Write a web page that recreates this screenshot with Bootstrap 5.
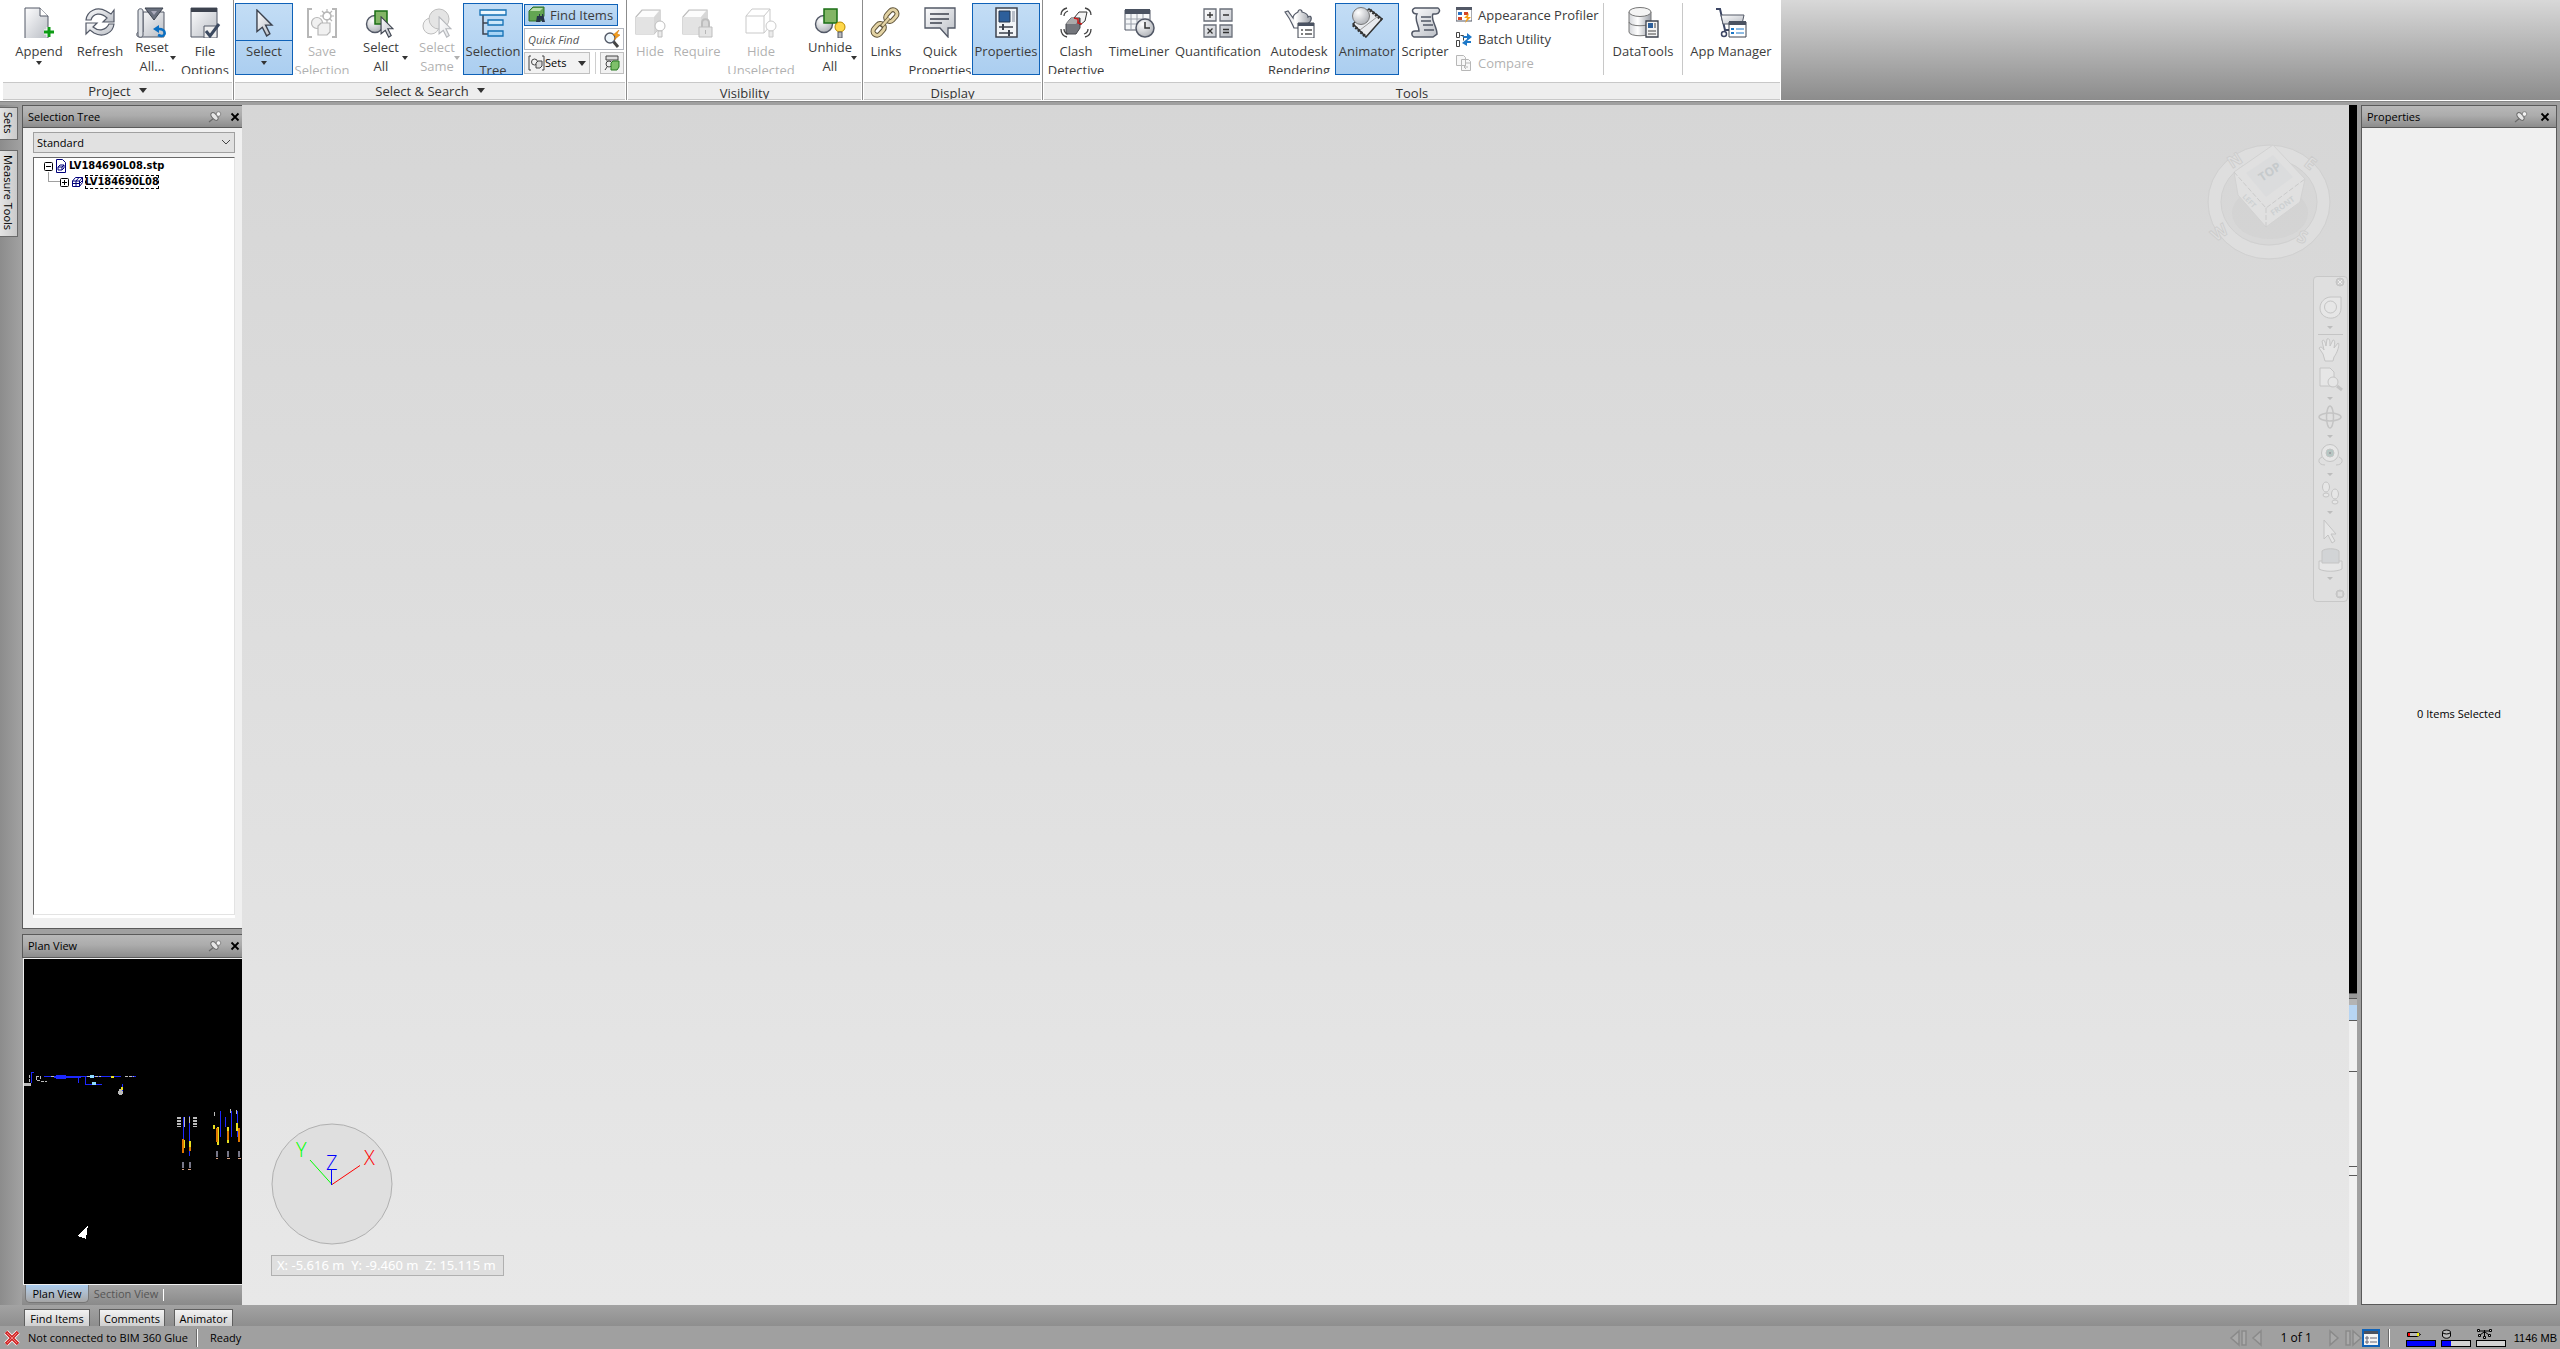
<!DOCTYPE html>
<html lang="en">
<head>
<meta charset="utf-8">
<meta name="viewport" content="width=device-width, initial-scale=1">
<title>Model Review</title>
<link href="https://cdn.jsdelivr.net/npm/bootstrap@5.3.0/dist/css/bootstrap.min.css" rel="stylesheet">
<style>
:root{--ui:"Open Sans","Noto Sans",sans-serif;--rib:"Open Sans","Noto Sans",sans-serif;--edge:#5a5a5a;--chrome:#a0a0a0}
body{background:var(--chrome);font-family:var(--ui);font-size:11px;line-height:16px;color:#000;overflow:hidden}
svg{display:block;flex:none}
button{font-family:inherit}
/* ribbon */
.ribbon{background:linear-gradient(#d8d8d8,#8c8c8c);border-bottom:1px solid #fff;height:101px}
.ribbon-sheet{background:#fff;font-family:var(--rib);font-size:13px;color:#3c3c3c;padding-left:2px}
.rgroup{border-right:1px solid #8c8c8c;height:100px}
.rgroup:last-child{border-right:0}
.rbody{height:82px;padding:3px 2px 0 1px}
.rname{height:18px;line-height:21px;background:#eee;border-top:1px solid #c8c8c8;border-bottom:1px solid #c8c8c8;margin:0 1px;overflow:hidden;color:#333;font-size:13px}
.rname .arrow{margin-top:-2px}
.rb{--bs-btn-padding-x:0;--bs-btn-padding-y:0;--bs-btn-border-radius:0;--bs-btn-font-size:13px;--bs-btn-line-height:19px;--bs-btn-color:#3c3c3c;--bs-btn-border-color:transparent;--bs-btn-disabled-color:#333;--bs-btn-disabled-border-color:transparent;--bs-btn-disabled-opacity:.38;height:72px;padding-top:2px;display:flex;flex-direction:column;align-items:center;overflow:hidden;white-space:nowrap;position:relative;flex:none}
.rb .cap{margin-top:4px}
.rb.menu2 .cap{margin-top:0}
.rb.on,.find.on{background:linear-gradient(#c3ddf5,#abcef0);border-color:#0f62b8}
.arrow{width:0;height:0;border:3px solid transparent;border-top:4px solid #333;border-bottom:0}
.arrow.big{border-width:4px;border-top-width:5px}
.menu2 .arrow{position:absolute;right:2px;top:52px}
.split::before{content:"";position:absolute;left:0;right:0;top:36px;border-top:1px solid #0f62b8}
.w-a{width:44px}.w-m{width:50px}.w-b{width:52px}.w-n{width:54px}.w-c{width:58px}.w-d{width:60px}.w-e{width:64px}.w-f{width:68px}.w-g{width:72px}.w-h{width:78px}.w-i{width:90px}.w-j{width:96px}
.stack{width:100px;gap:2px;margin:1px 0 0 1px}
.find{--bs-btn-padding-x:4px;--bs-btn-padding-y:0;--bs-btn-border-radius:0;--bs-btn-font-size:13px;--bs-btn-line-height:18px;--bs-btn-color:#3c3c3c;height:22px;display:flex;align-items:center;gap:4px;width:94px;padding:0 3px;white-space:nowrap}
.qf{border:1px solid #b4b8c0;height:22px;padding:0 2px 0 3px}
.qf input{border:0;background:none;outline:0;width:70px;font-size:11px;font-style:italic;padding:0;color:#555;height:18px}
.qf input::placeholder{color:#555;opacity:1}
.mini{--bs-btn-padding-x:3px;--bs-btn-padding-y:0;--bs-btn-border-radius:0;--bs-btn-border-color:#c0c0c0;--bs-btn-bg:#f2f2f2;--bs-btn-color:#000;--bs-btn-font-size:11px;--bs-btn-line-height:16px;height:22px;display:flex;align-items:center;font-family:var(--ui)}
.rlist{width:152px;padding:0 0 0 5px}
.ritem{--bs-btn-padding-x:0;--bs-btn-padding-y:0;--bs-btn-border-width:0;--bs-btn-font-size:13px;--bs-btn-line-height:24px;--bs-btn-color:#3c3c3c;--bs-btn-disabled-color:#333;--bs-btn-disabled-opacity:.38;display:flex;align-items:center;gap:6px;height:24px;white-space:nowrap}
.vsep{width:1px;height:72px;background:#c8c8c8}
/* work area */
.work{border-top:1px solid #858585;padding-top:3px;min-height:0}
.rail{width:22px;background:linear-gradient(90deg,#8c8c8c,#a2a2a2);padding-top:2px;gap:10px}
.vtab{writing-mode:vertical-rl;--bs-btn-padding-x:0;--bs-btn-padding-y:0;--bs-btn-border-radius:0;--bs-btn-border-color:#6a6a6a;--bs-btn-color:#000;--bs-btn-font-size:11px;--bs-btn-line-height:14px;width:18px;background:linear-gradient(90deg,#e4e4e4,#cacaca);border-left:0;padding:4px 1px 6px 0;text-align:left}
.leftcol{width:220px;gap:5px}
.pane{background:#f0f0f0;border:1px solid var(--edge);min-height:0}
.leftcol .pane{border-right:0}
.pane-head{height:22px;background:linear-gradient(#b8b8b8,#acacac 45%,#8c8c8c);border-bottom:1px solid var(--edge);padding:0 2px 0 5px;font-size:11px}
.pane-head h2{font-size:11px;line-height:20px;font-weight:400;margin:0}
.xbtn{border:0;background:none;padding:0}
.pane-in{padding:4px 7px 13px 10px}
.stdsel{--bs-form-select-bg-img:none;height:21px;border:1px solid #a0a0a0;border-radius:0;background:#e1e1e1;font-size:11px;line-height:16px;padding:0 3px;color:#000;appearance:none;width:100%}
.selwrap svg{position:absolute;right:4px;top:7px}
.treebox{background:#fff;border:1px solid #e3e3e3;border-top-color:#696969;border-left-color:#696969;box-shadow:0 3px #fff;padding:0 0 0 10px;font-weight:700;font-family:"DejaVu Sans Condensed","DejaVu Sans",sans-serif}
.treebox ul{margin:0;padding:0;list-style:none}
.trow{height:16px;gap:2px}
.kid{margin-left:16px;position:relative}
.kid::before{content:"";position:absolute;left:-12px;top:-2px;width:12px;height:10px;border-left:1px solid #a0a0a0;border-bottom:1px solid #a0a0a0}
.focusname{outline:1px dashed #000;outline-offset:-1px;line-height:14px}
.planpane{height:371px;border:0;background:none}
.planpane .pane-head{border:1px solid var(--edge);border-right:0;height:24px}
.plancanvas{background:#000;border:1px solid #eee;border-width:1px 0 1px 1px;margin-left:1px}
.plantabs{height:20px;background:linear-gradient(#a4a4a4,#8a8a8a);padding-left:3px}
.ptab{border:1px solid #777;border-top:0;border-radius:0 0 5px 5px;background:linear-gradient(#a9ccee,#b0bfd0 40%,#a6a6a6);padding:0;width:64px;height:18px;line-height:16px;font-size:11px;color:#000}
.ptab.off{border-color:transparent;background:none;color:#555;width:74px}
.scene{background:linear-gradient(#d6d6d6,#e8e8e8);min-width:0}
.cube{position:absolute;right:15px;top:36px}
.navbarv{position:absolute;right:1px;top:171px;width:35px;height:326px;border:1px solid #c8c8c8;border-radius:4px;background:#dfdfdf}
.navbarv svg{width:33px;height:324px}
.axes{position:absolute;left:28px;bottom:59px}
.coords{position:absolute;left:29px;bottom:29px;border:1px solid #b0b0b0;background:#dfdfdf;color:#fff;font-family:"Noto Sans",sans-serif;font-size:13px;line-height:19px;padding:0 5px;white-space:pre;width:233px}
.strip{width:8px;background:#f0f0f0}
.strip i{display:block}
.s-black{background:#000;flex:888 0 0}.s-low{flex:312 0 0;display:flex;flex-direction:column}
.s-1{height:5px;background:#999;border-top:1px solid var(--edge)}
.s-2{height:7px;background:#b4b4b4;border-top:1px solid var(--edge)}
.s-3{height:16px;background:#b7d5f3;border-bottom:1px solid var(--edge)}
.s-4{height:51px;border-bottom:1px solid var(--edge)}.s-5{height:95px;border-bottom:1px solid var(--edge)}.s-6{height:9px;border-bottom:1px solid var(--edge)}
.props{width:196px;margin:0 3px 0 4px}
/* bottom */
.dock{height:21px;background:linear-gradient(#a3a3a3,#8e8e8e);padding:4px 0 0 24px;gap:9px}
.dtab{border:1px solid #5f5f5f;border-bottom:0;background:linear-gradient(#f2f2f2,#cfcfcf);font-size:11px;line-height:15px;padding:0;width:66px;color:#000}
.dtab.sm{width:59px}
.status{height:23px;background:var(--chrome);padding:0 3px 0 4px}
.ssep{width:2px;height:18px;background:linear-gradient(90deg,#6a6a6a 50%,#fff 50%)}
.pages{font-size:12px}
.mem{font-family:"Liberation Sans",sans-serif}
.meter{width:30px;height:7px;border:1px solid #000;background:#d4d4d4;border-radius:0;--bs-progress-bar-bg:#00f}
.gauges{gap:5px}
.gauge{gap:1px;width:30px}
</style>
</head>
<body class="vh-100 d-flex flex-column">
<svg width="0" height="0" class="position-absolute" aria-hidden="true"><defs>
<linearGradient id="g" x1="0" y1="0" x2="1" y2="1"><stop offset="0" stop-color="#fdfdfe"/><stop offset="1" stop-color="#b9bdc4"/></linearGradient>
<linearGradient id="gb" x1="0" y1="0" x2="0" y2="1"><stop offset="0" stop-color="#f4fbff"/><stop offset="1" stop-color="#9fd0f4"/></linearGradient>
<linearGradient id="gs" x1="0" y1="0" x2="1" y2="0"><stop offset="0" stop-color="#d4d6da"/><stop offset=".4" stop-color="#fff"/><stop offset="1" stop-color="#9a9ea6"/></linearGradient>
<radialGradient id="gr" cx=".35" cy=".3" r=".8"><stop offset="0" stop-color="#fff"/><stop offset="1" stop-color="#a9acb2"/></radialGradient>
<symbol id="cur" viewBox="0 0 16 26"><path d="M1 1v20l5-4 4 8 3-2-4-8h6z" fill="url(#g)" stroke="#3c424e" stroke-width="1.3"/></symbol>
<symbol id="pin" viewBox="0 0 14 14"><path d="M1 12l5-4" stroke="#6a6a6a" stroke-width="1.2"/><ellipse cx="6.500" cy="6.500" rx="2.500" ry="4.500" transform="rotate(-42 6.500 6.500)" fill="#e6e6e6" stroke="#6a6a6a"/><path d="M7 4l3 4 2-3-3-3z" fill="#8a8a8a"/><circle cx="10.500" cy="4" r="2.300" fill="#f4f4f4" stroke="#777" stroke-width=".8"/></symbol>
<symbol id="xx" viewBox="0 0 10 10"><path d="M1.500 1.500l7 7M8.500 1.500l-7 7" stroke="#000" stroke-width="1.8"/></symbol>
<symbol id="box" viewBox="0 0 26 26"><path d="M1 8l6-7h18v17l-6 7H1z" fill="#dadada" stroke="#555" stroke-width="1.200"/><path d="M2 8l5.500-6h16L19 8z" fill="#f8f8f8"/><path d="M19 8l6-7v17l-6 7z" fill="#999"/><path d="M1 8h18v17H1z" fill="#b8b8b8"/></symbol>
</defs></svg>

<header class="ribbon d-flex">
<div class="ribbon-sheet d-flex">
 <section class="rgroup"><div class="rbody d-flex">
  <button class="btn rb w-g" type="button"><svg width="32" height="32"><path d="M2 3h15l8 8v23H2z" transform="translate(0 -1)" fill="url(#g)" stroke="#525866"/><path d="M17 2v8h8" fill="#fff" stroke="#525866"/><path d="M21 26h10M26 21v10" stroke="#fff" stroke-width="5"/><path d="M21 26h10M26 21v10" stroke="#0d9c14" stroke-width="3"/></svg><span class="cap">Append</span><span class="arrow"></span></button>
  <button class="btn rb w-m" type="button"><svg width="32" height="32"><g fill="url(#g)" stroke="#525866" stroke-width="1.200"><path d="M2 14C3 5 13 0 22 5l5 3 3-4v12H19l4-4C17 6 9 7 7 14z"/><path d="M30 18c-1 9-11 14-20 9l-4-3-4 4V17h11l-4 4c6 5 13 3 16-3z"/></g></svg><span class="cap">Refresh</span></button>
  <button class="btn rb menu2 w-n" type="button"><svg width="32" height="32"><path d="M7 6h21v25H3c-3 0-3-5 0-5h4z" fill="url(#g)" stroke="#525866"/><path d="M2 5c0-3 5-3 5 0v24c0 3-5 3-5 0z" fill="#dfe2e6" stroke="#525866"/><path d="M9 2h18l-9 12z" fill="#69707e" stroke="#3c424e"/><path d="M15 5h6l-3 4z" fill="#aab"/><path d="M22 29c9 4 9-7 0-6" fill="none" stroke="#0a6fc2" stroke-width="2.500"/><path d="M17 23l6-4v8z" fill="#0a6fc2"/></svg><span class="cap">Reset<br>All...</span><span class="arrow"></span></button>
  <button class="btn rb w-b" type="button"><svg width="32" height="32"><path d="M2 2h26v29H2z" fill="url(#g)" stroke="#525866"/><path d="M2 2h26v4H2z" fill="#3c424e"/><path d="M15 20h13v12H15z" fill="#eee" stroke="#525866"/><path d="M17 25l4 5 9-12" fill="none" stroke="#3c4a60" stroke-width="3"/></svg><span class="cap">File<br>Options</span></button>
 </div><div class="rname d-flex justify-content-center gap-2 align-items-center"><span>Project</span><span class="arrow big"></span></div></section>

 <section class="rgroup"><div class="rbody d-flex">
  <button class="btn rb split on w-c" type="button"><svg width="32" height="32"><use href="#cur" x="7" y="3" width="19" height="28"/></svg><span class="cap">Select</span><span class="arrow"></span></button>
  <button class="btn rb w-c" type="button" disabled><svg width="32" height="32" fill="none" stroke="#444" stroke-width="1.200"><path d="M6 3H2v28h4M26 3h4v28h-4" stroke-width="2"/><circle cx="11" cy="17" r="5.500" fill="#ddd"/><path d="M12 20l3-3h9v9l-3 3h-9z" fill="#ddd"/><circle cx="21" cy="10" r="4" stroke-width="1.500"/><path d="M21 3v4M21 13v4M14 10h4M24 10h4M16 5l3 3M26 5l-3 3M26 15l-3-3"/></svg><span class="cap">Save<br>Selection</span></button>
  <button class="btn rb menu2 w-d" type="button"><svg width="32" height="32"><circle cx="10" cy="18" r="8.500" fill="url(#gr)" stroke="#525866" stroke-width="1.400"/><path d="M10 5h12v13H10z" fill="#83b566" stroke="#1b6f16" stroke-width="1.500"/><use href="#cur" x="15" y="10" width="14" height="22"/></svg><span class="cap">Select<br>All</span><span class="arrow"></span></button>
  <button class="btn rb menu2 w-b" type="button" disabled><svg width="32" height="32"><circle cx="10" cy="20" r="8" fill="#ddd" stroke="#555"/><circle cx="18" cy="13" r="10" fill="#bbb" stroke="#555"/><use href="#cur" x="17" y="10" width="14" height="22"/></svg><span class="cap">Select<br>Same</span><span class="arrow"></span></button>
  <button class="btn rb on w-d" type="button"><svg width="32" height="32"><path d="M6 9v19h8M6 17h8" fill="none" stroke="#3c424e" stroke-width="1.500"/><g fill="url(#gb)" stroke="#1370b4" stroke-width="1.300"><path d="M3 4h26v5H3zM11 14h15v5H11zM11 25h15v5H11z"/></g></svg><span class="cap">Selection<br>Tree</span></button>
  <div class="stack d-flex flex-column">
   <button class="btn find on" type="button"><svg width="18" height="18"><path d="M1 5l4-4h11v9l-3 5H1z" fill="#63a552" stroke="#2f6f2b"/><path d="M2 5l3-3h10l-3 3z" fill="#b8dca8"/><path d="M9 10h2v-2h1v2h2v-2h1l2 8h-3l-1-3-1 3H8z" fill="#27364a"/></svg><span>Find Items</span></button>
   <label class="qf d-flex align-items-center justify-content-between"><input type="text" placeholder="Quick Find" aria-label="Quick Find"><svg width="18" height="18"><path d="M10 11l5 6" stroke="#444" stroke-width="3"/><circle cx="7" cy="8" r="5" fill="#eef6fb" stroke="#525866" stroke-width="1.400"/><path d="M16 0l-6 5 3 1-2 4 6-5-3-1z" fill="#f6a01a" stroke="#c96a00" stroke-width=".5"/></svg></label>
   <div class="d-flex justify-content-between align-items-center"><button class="btn mini" type="button"><svg width="17" height="16" fill="none" stroke="#444"><path d="M3 1H1v14h2M14 1h2v14h-2"/><circle cx="6.500" cy="7" r="3"/><path d="M8 8l2-2h4v5l-2 2H8z" fill="#ddd"/></svg><span class="me-2">Sets</span><span class="arrow big ms-1"></span></button><span class="vr"></span><button class="btn mini" type="button" aria-label="Manage Sets"><svg width="16" height="16"><path d="M2 1h12v4H2z" fill="#ddd" stroke="#444"/><circle cx="5" cy="9" r="3" fill="#eee" stroke="#444"/><path d="M3 12l-2 3" stroke="#444"/><path d="M7 8l2-2h6v6l-2 3H7z" fill="#7fc06a" stroke="#2a7a22"/></svg></button></div>
  </div>
 </div><div class="rname d-flex justify-content-center gap-2 align-items-center"><span>Select &amp; Search</span><span class="arrow big"></span></div></section>

 <section class="rgroup"><div class="rbody d-flex">
  <button class="btn rb w-a" type="button" disabled><svg width="32" height="32"><use href="#box" x="1" y="3" width="26" height="26"/><circle cx="26" cy="20" r="5" fill="#fff" stroke="#555"/><path d="M24 25h4v6h-4z" fill="#ccc" stroke="#555"/></svg><span class="cap">Hide</span></button>
  <button class="btn rb w-m" type="button" disabled><svg width="32" height="32"><use href="#box" x="1" y="3" width="26" height="26"/><path d="M21 21v-4c0-5 7-5 7 0v4" fill="none" stroke="#555" stroke-width="2"/><path d="M18 21h13v10H18z" fill="#bbb" stroke="#555"/><path d="M24.500 24v4" stroke="#444"/></svg><span class="cap">Require</span></button>
  <button class="btn rb w-h" type="button" disabled><svg width="32" height="32" stroke="#777" fill="#fff"><path d="M1 10l6-7h18v17l-6 7H1zM1 10h18v17M19 10l6-7"/><circle cx="26" cy="20" r="5"/><path d="M24 25h4v6h-4z" fill="#ccc"/></svg><span class="cap">Hide<br>Unselected</span></button>
  <button class="btn rb menu2 w-d" type="button"><svg width="32" height="32"><circle cx="10" cy="18" r="8.500" fill="url(#gr)" stroke="#525866" stroke-width="1.400"/><path d="M10 3h13v14H10z" fill="#83b566" stroke="#1b6f16" stroke-width="1.500"/><circle cx="26" cy="21" r="5" fill="#ffd84a" stroke="#b98a00"/><path d="M24 26h4v6h-4z" fill="#bbb" stroke="#525866"/></svg><span class="cap">Unhide<br>All</span><span class="arrow"></span></button>
 </div><div class="rname text-center">Visibility</div></section>

 <section class="rgroup"><div class="rbody d-flex">
  <button class="btn rb w-a" type="button"><svg width="32" height="32"><g fill="none" stroke="#5d5238" stroke-width="5"><rect x="17" y="3" width="8" height="13" rx="4" transform="rotate(42 21 10)"/><rect x="5" y="17" width="8" height="13" rx="4" transform="rotate(42 9 23)"/></g><g fill="none" stroke="#e3d3a4" stroke-width="3"><rect x="17" y="3" width="8" height="13" rx="4" transform="rotate(42 21 10)"/><rect x="5" y="17" width="8" height="13" rx="4" transform="rotate(42 9 23)"/><path d="M11 21l8-9" stroke="#5d5238" stroke-width="4"/><path d="M12 20l7-8" stroke-width="2.500"/></g></svg><span class="cap">Links</span></button>
  <button class="btn rb w-e" type="button"><svg width="32" height="32"><path d="M1 2h30v20h-7v9l-8-9H1z" fill="url(#g)" stroke="#525866" stroke-width="1.300"/><path d="M6 8h19M6 13h19M6 17h12" stroke="#3c424e" stroke-width="1.500"/></svg><span class="cap">Quick<br>Properties</span></button>
  <button class="btn rb on w-f" type="button"><svg width="32" height="32"><path d="M6 2h21v29H6z" fill="#f1f4f7" stroke="#3c424e" stroke-width="1.500"/><path d="M9 5h11v11H9z" fill="#2d5f9b" stroke="#24374f"/><path d="M22 5h3v11h-3z" fill="#b8bec8"/><path d="M9 21h14M9 27h14" stroke="#3c424e" stroke-width="1.500"/><path d="M13 18v6M19 24v6" stroke="#3c424e" stroke-width="2"/></svg><span class="cap">Properties</span></button>
 </div><div class="rname text-center">Display</div></section>

 <section class="rgroup"><div class="rbody d-flex ps-1">
  <button class="btn rb w-c" type="button"><svg width="32" height="32"><path d="M6 18l5-6h9v10l-4 6H6z" fill="#74767c" stroke="#44464c"/><path d="M6 18l5-6h9l-4 6z" fill="#aaa"/><path d="M14 12l5-6h8l-2 9-5 4v-7z" fill="#f4f4f4" stroke="#333"/><path d="M14 12l4 1v4l4 1" fill="none" stroke="#d01818" stroke-width="1.500"/><path d="M1 9c0-4 2-6 6-7M4 10c0-3 1-4 4-5M31 9c0-4-2-6-6-7M1 23c0 4 2 7 6 8M4 23c0 3 1 4 4 5M31 23c0 4-2 7-6 8M28 23c0 3-1 4-4 5" fill="none" stroke="#444" stroke-width="1.300"/></svg><span class="cap">Clash<br>Detective</span></button>
  <button class="btn rb w-f" type="button"><svg width="32" height="32"><path d="M2 4h25v20H2z" fill="#f4f6f8" stroke="#525866"/><path d="M2 3h25v5H2z" fill="#4a5261"/><path d="M2 13h25M2 18h25M8 8v16M14 8v16M20 8v16" stroke="#9aa0aa"/><circle cx="22" cy="22" r="9" fill="url(#gr)" stroke="#525866" stroke-width="1.500"/><path d="M22 16v6h5" fill="none" stroke="#333" stroke-width="1.500"/></svg><span class="cap">TimeLiner</span></button>
  <button class="btn rb w-i" type="button"><svg width="32" height="32"><g fill="url(#g)" stroke="#6a6f79" stroke-width="1.300"><path d="M2 3h12v12H2zM18 3h12v12H18zM2 19h12v12H2zM18 19h12v12H18z"/></g><path d="M5 9h6M8 6v6M21 9h6M5.500 22.500l5 5M10.500 22.500l-5 5M21 23.500h6M21 26.500h6" stroke="#333" stroke-width="1.300"/></svg><span class="cap">Quantification</span></button>
  <button class="btn rb w-g" type="button"><svg width="32" height="32"><path d="M2 6l3-1 5 7c0-3 3-5 5-6 0-3 4-3 4 0 4 1 6 3 6 5 4-3 5 4-1 7l-4 4H11C9 18 8 14 2 6z" fill="url(#gs)" stroke="#525866" stroke-width="1.200"/><path d="M15 17h16v15H15z" fill="#fff" stroke="#3c424e"/><path d="M15 17h16v3H15z" fill="#4a5261"/><path d="M18 24h2M22 24h7M18 28h2M22 28h7" stroke="#555" stroke-width="1.500"/></svg><span class="cap">Autodesk<br>Rendering</span></button>
  <button class="btn rb on w-e" type="button"><svg width="32" height="32"><path d="M2 18L18 3l13 10-16 18z" fill="#e8eaee" stroke="#333" stroke-width="1.500"/><path d="M19 4l12 10M2 19l13 12" stroke="#333" stroke-width="3" stroke-dasharray="2 1.500"/><path d="M9 24l17-13" stroke="#999"/><circle cx="10" cy="10" r="8.500" fill="url(#gr)" stroke="#777"/></svg><span class="cap">Animator</span></button>
  <button class="btn rb w-b" type="button"><svg width="32" height="32"><path d="M6 2h23c3 2 1 6-2 6h-3c-3 5 4 12 4 20l-4 3H5c-3-1-3-6 1-6h4c0-6-5-11-2-17C3 8 2 3 6 2z" fill="url(#g)" stroke="#525866" stroke-width="1.500"/><path d="M12 11h10M12 15h10M14 19h10M15 24h10" stroke="#525866" stroke-width="1.300"/></svg><span class="cap">Scripter</span></button>
  <div class="rlist">
   <button class="btn ritem" type="button"><svg width="16" height="16"><path d="M0 1h16v13H0z" fill="#fff" stroke="#525866"/><path d="M0 0h16v3H0z" fill="#525866"/><path d="M2 5h4v3H2z" fill="#2a6fc0"/><path d="M8 5h4v3H8zM2 10h4v3H2z" fill="#d2452a"/><path d="M13 6l-5 5h3l-2 5 6-6h-3z" fill="#f6a01a"/></svg>Appearance Profiler</button>
   <button class="btn ritem" type="button"><svg width="16" height="16" fill="none" stroke="#444"><path d="M.5 1.500h3v5h-3zM.5 9.500h3v6h-3zM4.500 4.500h3v5"/><path d="M6 5h5V2l5 4-5 4V7H8M15 12h-4v3l-5-3 5-4v2h4z" fill="#1c78c8" stroke="none"/></svg>Batch Utility</button>
   <button class="btn ritem" type="button" disabled><svg width="16" height="16" fill="#eee" stroke="#444"><path d="M.5.5h7l2 2v8h-9zM5.500 4.500h7l2 2v9h-9z"/><path d="M15 8h-6M12 12h-4l2-2M8 12l2 2"/></svg>Compare</button>
  </div>
  <span class="vsep"></span>
  <button class="btn rb w-h" type="button"><svg width="32" height="32"><path d="M2 6v20c0 5 22 5 22 0V6z" fill="url(#gs)" stroke="#777"/><ellipse cx="13" cy="6" rx="11" ry="4.500" fill="#f4f4f4" stroke="#777"/><path d="M2 16c0 5 22 5 22 0" fill="none" stroke="#777"/><path d="M19 15h12v16H19z" fill="#f4f4f4" stroke="#3c424e" stroke-width="1.300"/><path d="M21 17h5v5h-5z" fill="#2d5f9b"/><path d="M27 17h2v5h-2z" fill="#999"/><path d="M21 25h8M21 28h8" stroke="#444"/></svg><span class="cap">DataTools</span></button>
  <span class="vsep"></span>
  <button class="btn rb w-j" type="button"><svg width="32" height="32"><path d="M1 3h4l5 21h4" fill="none" stroke="#3c4664" stroke-width="2"/><path d="M6 9h23l-2 9H8z" fill="url(#g)" stroke="#525866"/><circle cx="9" cy="28" r="2.500" fill="#fff" stroke="#3c4664" stroke-width="1.500"/><path d="M14 16h17v15H14z" fill="#fff" stroke="#3c424e"/><path d="M14 15h17v4H14z" fill="#4a5261"/><path d="M16 22h3v2h-3zM16 26h3v2h-3z" fill="#1c78c8"/><path d="M21 23h8M21 27h8" stroke="#1c78c8"/></svg><span class="cap">App Manager</span></button>
 </div><div class="rname text-center">Tools</div></section>
</div>
</header>

<main class="work d-flex flex-grow-1">
 <nav class="rail d-flex flex-column align-items-start"><button class="btn vtab" type="button">Sets</button><button class="btn vtab" type="button">Measure Tools</button></nav>
 <div class="leftcol d-flex flex-column">
  <section class="pane d-flex flex-column flex-grow-1">
   <div class="pane-head d-flex align-items-center"><h2 class="me-auto">Selection Tree</h2><button class="xbtn me-2" type="button" aria-label="Pin"><svg width="14" height="14"><use href="#pin"/></svg></button><button class="xbtn" type="button" aria-label="Close"><svg width="10" height="10"><use href="#xx"/></svg></button></div>
   <div class="pane-in d-flex flex-column flex-grow-1">
    <div class="selwrap position-relative mb-1"><select class="stdsel" aria-label="Tree view"><option>Standard</option></select><svg width="10" height="7" fill="none" stroke="#444"><path d="M1 1l4 4 4-4"/></svg></div>
    <div class="treebox flex-grow-1"><ul>
     <li class="d-flex align-items-center trow"><svg width="9" height="9" fill="none" stroke="#000"><rect x=".5" y=".5" width="8" height="8" rx="1"/><path d="M2 4.500h5"/></svg><svg width="12" height="14" fill="#fff" stroke="#00007a"><path d="M1.500.5h6l3 3v10h-9z"/><path d="M3 8l2-2h4v3l-2 2H3zM3 8h4v3M7 8l2-2"/></svg><span>LV184690L08.stp</span></li>
     <li class="d-flex align-items-center trow kid"><svg width="9" height="9" fill="none" stroke="#000"><rect x=".5" y=".5" width="8" height="8" rx="1"/><path d="M2 4.500h5M4.500 2v5"/></svg><svg width="12" height="12" fill="#fff" stroke="#00007a"><path d="M1.500 5l3-3.500h7v5l-3 4h-7zM1.500 5h7v5.500M8.500 5l3-3.500M5 5v5.500M1.500 7.500h7l3-3M5 5l3-3.500"/></svg><span class="focusname">LV184690L08</span></li>
    </ul></div>
   </div>
  </section>
  <section class="planpane d-flex flex-column">
   <div class="pane-head d-flex align-items-center"><h2 class="me-auto">Plan View</h2><button class="xbtn me-2" type="button" aria-label="Pin"><svg width="14" height="14"><use href="#pin"/></svg></button><button class="xbtn" type="button" aria-label="Close"><svg width="10" height="10"><use href="#xx"/></svg></button></div>
   <div class="plancanvas flex-grow-1"><svg width="218" height="325" shape-rendering="crispEdges">
    <g stroke="#1c28ff" fill="none"><path d="M7 116v-3h3M7 116v8M20 117.500h77M30 118h22" stroke-width="1"/><path d="M32 118h10" stroke-width="4"/><path d="M30 117.500h27" stroke-width="2"/><path d="M54 118v6M61 118v7h17M98 125v8M165.500 157v40M159 158v35"/><path d="M196 152v26M207 152v26M213 152v26M201 158v10M108 117.500h4"/></g>
    <g stroke="#bbb" fill="none"><path d="M0 125h7" stroke-width="3"/><path d="M5 116v10M12 117h4v4h-4zM17 122h6M27 117h4M63 117.500h14M101 117.500h9" stroke-dasharray="3 1"/><path d="M96 130v6M94 133h5" stroke-width="3"/><path d="M155 158v10M171 158v10" stroke-width="4" stroke-dasharray="2 1"/><path d="M160 158v10M190 153v4M206 150v4M212 151v4M165.500 158v6"/><path d="M159 203v6M165.500 203v6M193 192v6M204 192v6M215 192v6" stroke="#778" stroke-width="2"/></g>
    <path d="M87 117.500h3M98 128v3M190 166v4M160 181v8M194 168v18M204 168v16M213 164v8M166 182v6" stroke="#e8e020" stroke-width="2"/>
    <path d="M159 180v14M193 169v14M204 172v9M215 169v14M165.500 188v4" stroke="#e07800" stroke-width="2"/>
    <path d="M158 210.500h2M164 210.500h3M192 199.500h2M203 199.500h3M214 199.500h3" stroke="#d9a080"/>
    <path d="M66 117.500h4M68 124.500h4" stroke="#8fdcff" stroke-width="3"/>
    <path d="M64 266l-11 11 9 3z" fill="#fff"/></svg></div>
   <div class="plantabs d-flex"><button class="ptab" type="button">Plan View</button><button class="ptab off" type="button">Section View</button><span class="vr bg-white opacity-100 my-1"></span></div>
  </section>
 </div>
 <section class="scene flex-grow-1 position-relative">
  <svg class="cube" width="130" height="122" fill="none" font-family="Open Sans,sans-serif" font-weight="700">
   <ellipse cx="65" cy="61" rx="54" ry="50" stroke="#dedede" stroke-width="13"/><ellipse cx="65" cy="61" rx="61" ry="57" stroke="#d0d0d0"/><ellipse cx="65" cy="61" rx="48" ry="43" stroke="#d0d0d0"/>
   <ellipse cx="66" cy="72" rx="38" ry="26" fill="#cfcfcf" opacity=".5"/>
   <path d="M69 4l32 34-5 23-34 25-28-32-4-23z" fill="#e0e0e0" stroke="#d2d2d2"/><path d="M30 31l32 36 39-29M62 67v19" stroke="#cacaca" stroke-dasharray="5 2"/><path d="M69 14l20 22-27 20-20-24z" fill="#dbdcdd"/>
   <g fill="#cdd0d2"><text transform="translate(58 41) rotate(-34)" font-size="12" fill="#c6cacc">TOP</text><text transform="translate(38 56) rotate(46)" font-size="7">LEFT</text><text transform="translate(69 75) rotate(-35)" font-size="8">FRONT</text></g>
   <g fill="#dedede" stroke="#cccccc" stroke-width=".8" font-size="17"><text transform="translate(28 28) rotate(-32)">N</text><text transform="translate(99 24) rotate(38)">E</text><text transform="translate(12 101) rotate(-35)">W</text><text transform="translate(92 100) rotate(20)">S</text></g>
  </svg>
  <div class="navbarv"><svg viewBox="0 0 33 324" fill="#e6e6e6" stroke="#c4c4c4">
   <circle cx="26" cy="5" r="4" fill="#ccc"/><path d="M24 3l4 4M28 3l-4 4" stroke="#eee"/><path d="M17 20h10v11c0 14-21 13-21 0 0-6 5-11 11-11z"/><circle cx="16.500" cy="30" r="6"/><path d="M4 57.500h25"/>
   <path d="M9 77l-4-6c2-2 4 0 5 2L8 64c2-2 3 0 4 5l1-7c2-1 3 0 3 7l3-6c2 0 2 2 1 8l4-5c2 0 0 9-4 14l-1 4h-8z"/>
   <path d="M6 91h10l4 4v14H6z"/><circle cx="19" cy="105" r="5"/><path d="M23 109l5 4" stroke-width="3"/>
   <g fill="none" stroke-width="1.500"><ellipse cx="16" cy="140" rx="11" ry="4"/><ellipse cx="16" cy="140" rx="3.500" ry="11"/></g>
   <circle cx="16" cy="176" r="8.500"/><circle cx="16" cy="176" r="4" fill="#b4c8c4"/><circle cx="16" cy="176" r="1.500" fill="#899"/><path d="M8 180c-5 2-4 8 3 8M25 180c5 2 4 8-3 8" fill="none"/>
   <ellipse cx="12" cy="210" rx="3.500" ry="5"/><ellipse cx="12" cy="218" rx="3" ry="2"/><ellipse cx="21" cy="217" rx="3.500" ry="5"/><ellipse cx="21" cy="225" rx="3" ry="2"/>
   <path d="M10 243v19l4-4 4 8 3-2-4-7h5z"/><path d="M5 284h23v8c-5 3-18 3-23 0z"/><path d="M8 274c3-3 14-3 17 0v12H8z" fill="#d2d4d6"/>
   <g fill="#bdbdbd" stroke="none"><path d="M13 49h6l-3 3zM13 120h6l-3 3zM13 158h6l-3 3zM13 196h6l-3 3zM13 234h6l-3 3zM13 300h6l-3 3z"/></g><circle cx="26" cy="317" r="4" fill="#ccc"/><path d="M24 316h4M24 318h4" stroke="#eee"/></svg></div>
  <svg class="axes" width="124" height="124" font-family="Open Sans,sans-serif" font-weight="300" font-size="20"><circle cx="62" cy="62" r="60" fill="#dfdfdf" stroke="#b0b0b0"/><path d="M62 62.500l28-19" stroke="#f00"/><path d="M62 62.500L40 38" stroke="#0f0"/><path d="M61.500 63V48" stroke="#00f"/><text x="94" y="43" fill="#f00">X</text><text x="26" y="35" fill="#0f0">Y</text><text x="56" y="48" fill="#00f">Z</text></svg>
  <div class="coords">X: -5.616 m  Y: -9.460 m  Z: 15.115 m</div>
 </section>
 <div class="strip d-flex flex-column" aria-hidden="true"><i class="s-black"></i><div class="s-low"><i class="s-1"></i><i class="s-2"></i><i class="s-3"></i><i class="s-4"></i><i class="s-5"></i><i class="s-6"></i></div></div>
 <aside class="pane props d-flex flex-column">
  <div class="pane-head d-flex align-items-center"><h2 class="me-auto">Properties</h2><button class="xbtn me-2" type="button" aria-label="Pin"><svg width="14" height="14"><use href="#pin"/></svg></button><button class="xbtn mx-1" type="button" aria-label="Close"><svg width="10" height="10"><use href="#xx"/></svg></button></div>
  <div class="flex-grow-1 d-flex align-items-center justify-content-center pb-1">0 Items Selected</div>
 </aside>
</main>
<div class="dock d-flex"><button class="dtab" type="button">Find Items</button><button class="dtab" type="button">Comments</button><button class="dtab sm" type="button">Animator</button></div>
<footer class="status d-flex align-items-center">
 <svg width="16" height="16"><path d="M2 2l12 12M14 2L2 14" stroke="#fff" stroke-width="5"/><path d="M2 2l12 12M14 2L2 14" stroke="#d02828" stroke-width="3.500"/><path d="M3 3l10 10M13 3L3 13" stroke="#f08080"/></svg>
 <span class="ms-2">Not connected to BIM 360 Glue</span><span class="ssep mx-2"></span><span class="ms-1 me-auto">Ready</span>
 <svg width="36" height="18" fill="#a9a9a9" stroke="#8a8a8a" stroke-width="1.500"><path d="M10 2v14L2 9zM13 2h4v14h-4zM32 2v14l-8-7z"/></svg>
 <span class="mx-3 pages">1 of 1</span>
 <svg width="34" height="18" fill="#a9a9a9" stroke="#8a8a8a" stroke-width="1.500"><path d="M2 2v14l8-7zM18 2h4v14h-4zM25 2v14l8-7z"/></svg>
 <button class="xbtn" type="button" aria-label="Sheet Browser"><svg width="18" height="18"><path d="M1 1h16v16H1z" fill="#f4f4f4" stroke="#0f62b8" stroke-width="2"/><path d="M2 2h14v3H2z" fill="#4a5261"/><path d="M4 8h2v2H4zM4 12h2v2H4z" fill="none" stroke="#667"/><path d="M8 9h7M8 13h7" stroke="#667"/></svg></button>
 <span class="ssep ms-2 me-3"></span>
 <div class="d-flex me-2 gauges">
  <div class="gauge d-flex flex-column"><svg width="16" height="10"><path d="M1.500 3.500h10l3 2-3 2h-10z" fill="#bbb" stroke="#000"/><path d="M2 4h2v3H2z" fill="red"/><path d="M11 4h2v3h-2z" fill="#ee0"/></svg><div class="progress meter"><div class="progress-bar" style="width:100%"></div></div></div>
  <div class="gauge d-flex flex-column"><svg width="11" height="10" fill="#bbb" stroke="#000"><path d="M1.500 3v4c1 3 7 3 8 0V3"/><ellipse cx="5.500" cy="3" rx="4" ry="2"/></svg><div class="progress meter"><div class="progress-bar" style="width:33%"></div></div></div>
  <div class="gauge d-flex flex-column"><svg width="17" height="10" fill="#ccc" stroke="#000"><path d="M3 2h11M8.500 1v7M8 3L4 6M9 3l4 3"/><path d="M1.500.5h2v2h-2zM13.500.5h2v2h-2zM2.500 5.500h2v2h-2zM12.500 5.500h2v2h-2zM7.500 7.500h2v2h-2z"/></svg><div class="progress meter"><div class="progress-bar" style="width:0%"></div></div></div>
 </div>
 <span class="mem">1146 MB</span>
</footer>
<script src="https://cdn.jsdelivr.net/npm/bootstrap@5.3.0/dist/js/bootstrap.bundle.min.js"></script>
</body>
</html>
